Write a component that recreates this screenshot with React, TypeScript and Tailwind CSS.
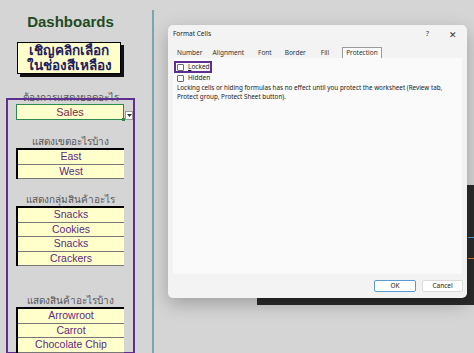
import React from 'react'

const cellFont = "font-['Liberation_Sans','Noto_Sans',sans-serif]"
const uiFont = "font-['Noto_Sans','Open_Sans',sans-serif]"

function Label({ text }: { text: string }) {
  return (
    <div className={`h-[12px] text-center text-[10px] leading-[12px] text-[#555555] ${cellFont}`}>{text}</div>
  )
}

function ItemTable({ items }: { items: string[] }) {
  return (
    <div className="w-[108px] border-l-2 border-t-2 border-black">
      {items.map((item, i) => (
        <div
          key={i}
          className={`h-[14.5px] border-b border-[#777777] bg-[#ffffcc] text-center text-[10.5px] leading-[13px] text-[#5e2a7e] ${cellFont}`}
        >
          {item}
        </div>
      ))}
    </div>
  )
}

function Checkbox({ children }: { children: React.ReactNode }) {
  return (
    <div className="flex items-center gap-[4px]">
      <div className="h-[7px] w-[7px] rounded-[1px] border border-[#6d6d6d] bg-white" />
      <span className="text-[6.5px] leading-[8px] text-[#222]">{children}</span>
    </div>
  )
}

const tabs = [
  { name: 'Number', ml: 'ml-0' },
  { name: 'Alignment', ml: 'ml-[10px]' },
  { name: 'Font', ml: 'ml-[14px]' },
  { name: 'Border', ml: 'ml-[13px]' },
  { name: 'Fill', ml: 'ml-[15px]' },
]

export default function App() {
  return (
    <div className="relative flex h-[353px] w-[474px] overflow-hidden bg-[#d5d5d5]">
      {/* sheet panel */}
      <div className="flex w-[152px] flex-col">
        <div className="flex w-[141px] flex-col items-center pt-[13px]">
          <div className={`text-[15px] font-bold leading-[18px] text-[#1f4a22] ${cellFont}`}>Dashboards</div>
          <div className="mt-[11px] ml-[-3px] flex h-[32px] w-[104px] flex-col items-center justify-center border border-black bg-[#ffffcc] shadow-[3px_3px_0_#111]">
            <div className={`text-[13.5px] font-bold leading-[15px] text-[#241c5e] ${cellFont}`}>เชิญคลิกเลือก</div>
            <div className={`text-[13.5px] font-bold leading-[15px] text-[#241c5e] ${cellFont}`}>ในช่องสีเหลือง</div>
          </div>
        </div>

        <div className="mt-[18px] mb-[-6px] w-[141px]">
          <Label text="ต้องการแสดงยอดอะไร" />
        </div>

        <div className="relative ml-[6px] h-[256px] w-[129px] border-2 border-[#5d2f8e] pl-[8px] pt-[4px]">
          <div className="flex items-end">
            <div className={`relative h-[16px] w-[108px] border border-[#2f8a4d] bg-[#ffffcc] text-center text-[11px] leading-[14px] text-[#7a2a4e] ${cellFont}`}>
              Sales
              <div className="absolute right-[-2px] bottom-[-2px] h-[3px] w-[3px] bg-[#2f8a4d]" />
            </div>
            <div className="ml-[1px] flex h-[9px] w-[8px] items-center justify-center border border-[#9a9a9a] bg-white">
              <svg width="5" height="3" viewBox="0 0 5 3">
                <path d="M0 0 L5 0 L2.5 3 Z" fill="#333" />
              </svg>
            </div>
          </div>

          <div className="mt-[16px] w-[108px]">
            <Label text="แสดงเขตอะไรบ้าง" />
          </div>
          <ItemTable items={['East', 'West']} />

          <div className="mt-[15px] w-[108px]">
            <Label text="แสดงกลุ่มสินค้าอะไร" />
          </div>
          <ItemTable items={['Snacks', 'Cookies', 'Snacks', 'Crackers']} />

          <div className="mt-[29px] w-[108px]">
            <Label text="แสดงสินค้าอะไรบ้าง" />
          </div>
          <ItemTable items={['Arrowroot', 'Carrot', 'Chocolate Chip']} />
        </div>
      </div>

      {/* divider */}
      <div className="mt-[10px] w-[1.5px] bg-[#7aa6b4]" />

      {/* dark chart image behind the dialog */}
      <div className="absolute left-[257px] top-[185px] h-[120px] w-[217px] bg-[#2a2a2a]">
        <div className="absolute right-0 top-[52px] h-[1px] w-[6px] bg-[#4aa3d8]" />
        <div className="absolute right-0 top-[73px] h-[1px] w-[6px] bg-[#e07a2a]" />
      </div>

      {/* Format Cells dialog */}
      <div className={`absolute left-[168px] top-[25px] flex h-[273px] w-[299px] flex-col rounded-[5px] bg-[#f3f3f3] shadow-[0_6px_18px_rgba(0,0,0,0.25)] ${uiFont}`}>
        <div className="flex h-[17px] items-center pl-[5px] pr-[10px] pt-[1px]">
          <span className="text-[6.5px] text-[#222]">Format Cells</span>
          <span className="ml-auto text-[7.5px] text-[#333]">?</span>
          <span className="ml-[20px] text-[9px] leading-none text-[#333]">✕</span>
        </div>
        <div className="mt-[5px] flex h-[11px] items-end pl-[9px]">
          {tabs.map((t) => (
            <span key={t.name} className={`${t.ml} pb-[1px] text-[6.5px] leading-[9px] text-[#333]`}>
              {t.name}
            </span>
          ))}
          <span className="ml-[13px] border border-b-0 border-[#9a9a9a] bg-[#fafafa] px-[3px] text-[6.5px] leading-[10px] text-[#333]">
            Protection
          </span>
        </div>
        <div className="mx-[5px] h-[216px] bg-[#fafafa] px-[4px] pt-[3px]">
          <div className="ml-[-3px] flex h-[12px] w-[38px] items-center border-2 border-[#5d2f8e] pl-[1px]">
            <Checkbox>
              <span className="underline">L</span>ocked
            </Checkbox>
          </div>
          <div className="mt-[1px]">
            <Checkbox>Hidden</Checkbox>
          </div>
          <div className="mt-[2px] whitespace-nowrap text-[6.3px] leading-[8.5px] text-[#222]">
            <div>Locking cells or hiding formulas has no effect until you protect the worksheet (Review tab,</div>
            <div className="text-[#222]">Protect group, Protect Sheet button).</div>
          </div>
        </div>
        <div className="flex flex-1 items-center justify-end gap-[6px] pr-[4px]">
          <div className="flex h-[12px] w-[42px] items-center justify-center rounded-[2px] border border-[#5a9bd5] bg-white text-[6.5px] text-[#222]">
            OK
          </div>
          <div className="flex h-[12px] w-[41px] items-center justify-center rounded-[2px] border border-[#dcdcdc] bg-white text-[6.5px] text-[#222]">
            Cancel
          </div>
        </div>
      </div>
    </div>
  )
}
